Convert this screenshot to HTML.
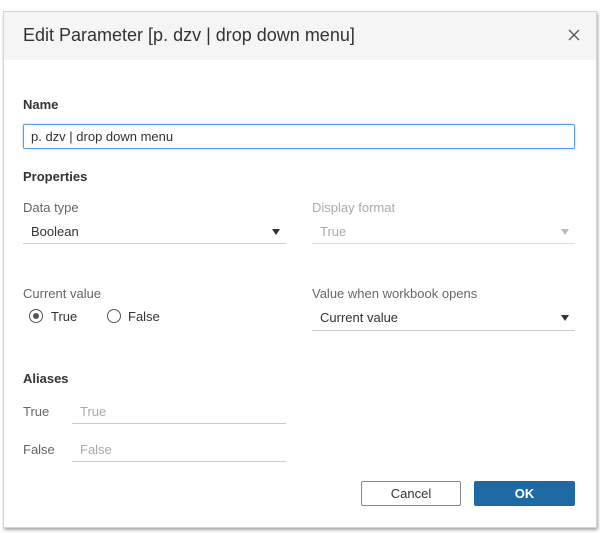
<!DOCTYPE html>
<html><head><style>
body{margin:0;width:600px;height:533px;background:#fff;font-family:"Liberation Sans",sans-serif;position:relative;overflow:hidden;color:#333}
.dlg{position:absolute;left:3px;top:11px;width:592px;height:515px;border:1px solid #d4d4d4;background:#fff;box-shadow:1px 2px 3px rgba(0,0,0,.35)}
.hdr{position:absolute;left:0;top:0;right:0;height:48px;background:#f5f5f5}
.a{position:absolute;white-space:nowrap;font-size:13px}
.b{font-weight:bold;color:#333}
.g{color:#666}
.l{color:#aaa}
.u{position:absolute;height:1px;background:#ccc}
.tri{position:absolute;width:0;height:0;border-left:4px solid transparent;border-right:4px solid transparent;border-top:6px solid #333}
</style></head><body>
<div class="dlg"><div class="hdr"></div></div>
<div class="a" style="left:23px;top:25px;font-size:18px;color:#333">Edit Parameter [p. dzv | drop down menu]</div>
<svg style="position:absolute;left:568px;top:29px" width="12" height="12"><path d="M1 1L11 11M11 1L1 11" stroke="#555" stroke-width="1.3"/></svg>
<div class="a b" style="left:23px;top:97px">Name</div>
<div style="position:absolute;left:23px;top:124px;width:550px;height:23px;border:1px solid #5aa0e0;border-radius:2px;box-shadow:0 0 2px #9cc8f0"></div>
<div class="a" style="left:31px;top:129px;color:#333">p. dzv | drop down menu</div>
<div class="a b" style="left:23px;top:169px">Properties</div>
<div class="a g" style="left:23px;top:200px">Data type</div>
<div class="a" style="left:31px;top:224px">Boolean</div>
<div class="tri" style="left:272px;top:229px"></div>
<div class="u" style="left:23px;top:243px;width:263px"></div>
<div class="a l" style="left:312px;top:200px">Display format</div>
<div class="a l" style="left:320px;top:224px">True</div>
<div class="tri" style="left:561px;top:229px;border-top-color:#bbb"></div>
<div class="u" style="left:312px;top:243px;width:263px;background:#ddd"></div>
<div class="a g" style="left:23px;top:286px">Current value</div>
<div style="position:absolute;left:29px;top:309px;width:12px;height:12px;border:1px solid #555;border-radius:50%"></div>
<div style="position:absolute;left:33px;top:313px;width:6px;height:6px;background:#555;border-radius:50%"></div>
<div class="a" style="left:51px;top:309px">True</div>
<div style="position:absolute;left:107px;top:309px;width:12px;height:12px;border:1px solid #555;border-radius:50%"></div>
<div class="a" style="left:128px;top:309px">False</div>
<div class="a g" style="left:312px;top:286px">Value when workbook opens</div>
<div class="a" style="left:320px;top:310px">Current value</div>
<div class="tri" style="left:561px;top:315px"></div>
<div class="u" style="left:312px;top:330px;width:263px"></div>
<div class="a b" style="left:23px;top:371px">Aliases</div>
<div class="a g" style="left:23px;top:404px">True</div>
<div class="a l" style="left:80px;top:404px">True</div>
<div class="u" style="left:72px;top:423px;width:214px"></div>
<div class="a g" style="left:23px;top:442px">False</div>
<div class="a l" style="left:80px;top:442px">False</div>
<div class="u" style="left:72px;top:461px;width:214px"></div>
<div style="position:absolute;left:361px;top:481px;width:98px;height:23px;border:1px solid #888;border-radius:2px;font-size:13px;text-align:center;line-height:23px;color:#333">Cancel</div>
<div style="position:absolute;left:474px;top:481px;width:101px;height:25px;background:#1f6aa3;border-radius:2px;font-size:13px;font-weight:bold;text-align:center;line-height:25px;color:#fff">OK</div>
</body></html>
